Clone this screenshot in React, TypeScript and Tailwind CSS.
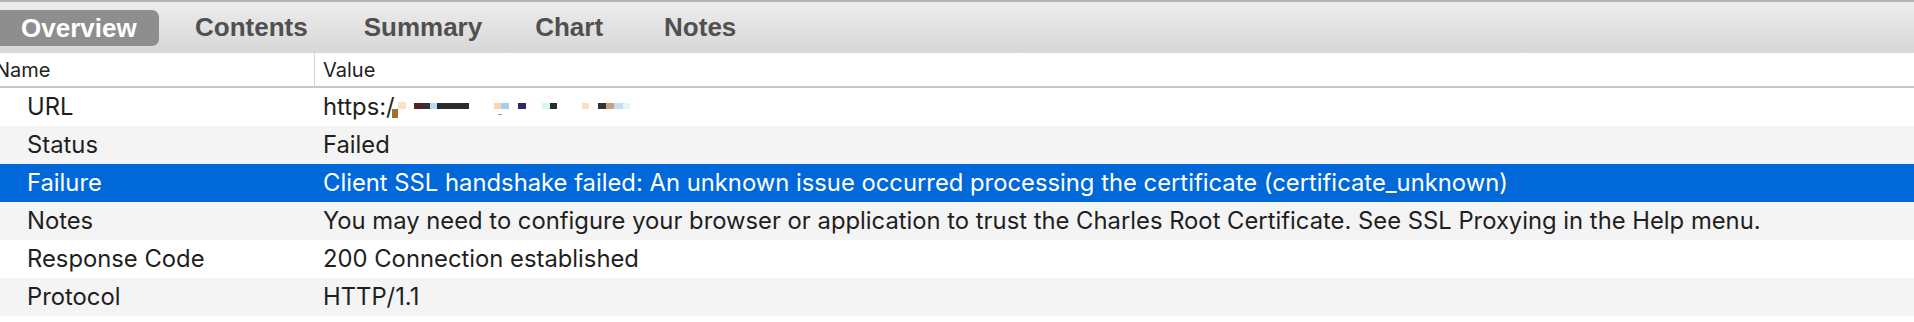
import React from "react";

const rows: { name: string; value: React.ReactNode; bg: string; selected?: boolean }[] = [
  { name: "URL", value: "url", bg: "bg-white" },
  { name: "Status", value: "Failed", bg: "bg-[#f4f4f4]" },
  {
    name: "Failure",
    value: "Client SSL handshake failed: An unknown issue occurred processing the certificate (certificate_unknown)",
    bg: "bg-[#0068d9]",
    selected: true,
  },
  {
    name: "Notes",
    value:
      "You may need to configure your browser or application to trust the Charles Root Certificate. See SSL Proxying in the Help menu.",
    bg: "bg-[#f4f4f4]",
  },
  { name: "Response Code", value: "200 Connection established", bg: "bg-white" },
  { name: "Protocol", value: "HTTP/1.1", bg: "bg-[#f4f4f4]" },
];

function Blur() {
  const blocks: [number, number, number, number, string][] = [
    [0, 7, 6, 9, "#a26f2c"],
    [6, 0, 8, 7, "#fde1c2"],
    [22, 1, 8, 6, "#5b2024"],
    [30, 1, 8, 6, "#333333"],
    [38, 1, 7, 6, "#b9d8f1"],
    [45, 1, 32, 6, "#2b2b2b"],
    [102, 1, 7, 6, "#fcd4ae"],
    [109, 1, 8, 6, "#a9cdef"],
    [106, 12, 4, 1, "#9a9a9a"],
    [126, 1, 8, 6, "#2b2b6b"],
    [150, 1, 8, 6, "#d2f8f8"],
    [158, 1, 7, 6, "#2b2b2b"],
    [190, 1, 7, 6, "#fde0c2"],
    [206, 1, 8, 6, "#333333"],
    [214, 1, 8, 6, "#c9a17f"],
    [222, 1, 9, 6, "#c2ddf5"],
    [231, 1, 7, 6, "#e0f6fb"],
  ];
  return (
    <svg width="240" height="17" viewBox="0 0 240 17" className="inline-block ml-[-3px] align-[-4px]">
      {blocks.map(([x, y, w, h, c], i) => (
        <rect key={i} x={x} y={y} width={w} height={h} fill={c} />
      ))}
    </svg>
  );
}

export default function App() {
  return (
    <div
      className="w-[1914px] h-[322px] bg-white overflow-hidden"
      style={{ fontFamily: 'Inter, "Liberation Sans", Arial, sans-serif' }}
    >
      {/* Tab bar */}
      <div className="border-t-2 border-[#b4b4b4] h-[53px] bg-gradient-to-b from-[#ededed] to-[#d7d7d7] flex items-center">
        <div
          className="flex items-center text-[26px] font-bold text-[#505050]"
          style={{ fontFamily: '"Liberation Sans", Arial, sans-serif' }}
        >
          <div className="w-[159px] h-[36px] bg-[#8e8e8e] rounded-r-[7px] text-white flex items-center pl-[21px] leading-none">
            Overview
          </div>
          <div className="ml-[36px]">Contents</div>
          <div className="ml-[56px]">Summary</div>
          <div className="ml-[53px]">Chart</div>
          <div className="ml-[61px]">Notes</div>
        </div>
      </div>

      {/* Header */}
      <div className="h-[35px] border-b-2 border-[#c8c8c8] flex items-center text-[20px] text-[#222]">
        <div className="w-[319px] h-full flex items-center border-r border-[#d4d4d4] ml-[-4px]">
          <span className="ml-[-1px]">Name</span>
        </div>
        <div className="pl-[8px]">Value</div>
      </div>

      {/* Rows */}
      {rows.map((r) => (
        <div
          key={r.name}
          className={`h-[38px] flex items-center text-[23.8px] whitespace-nowrap ${r.bg} ${
            r.selected ? "text-white" : "text-[#1f1f1f]"
          }`}
        >
          <div className="w-[323px] pl-[27px] shrink-0">{r.name}</div>
          <div>
            {r.value === "url" ? (
              <span>
                https:/
                <Blur />
              </span>
            ) : (
              r.value
            )}
          </div>
        </div>
      ))}
    </div>
  );
}
